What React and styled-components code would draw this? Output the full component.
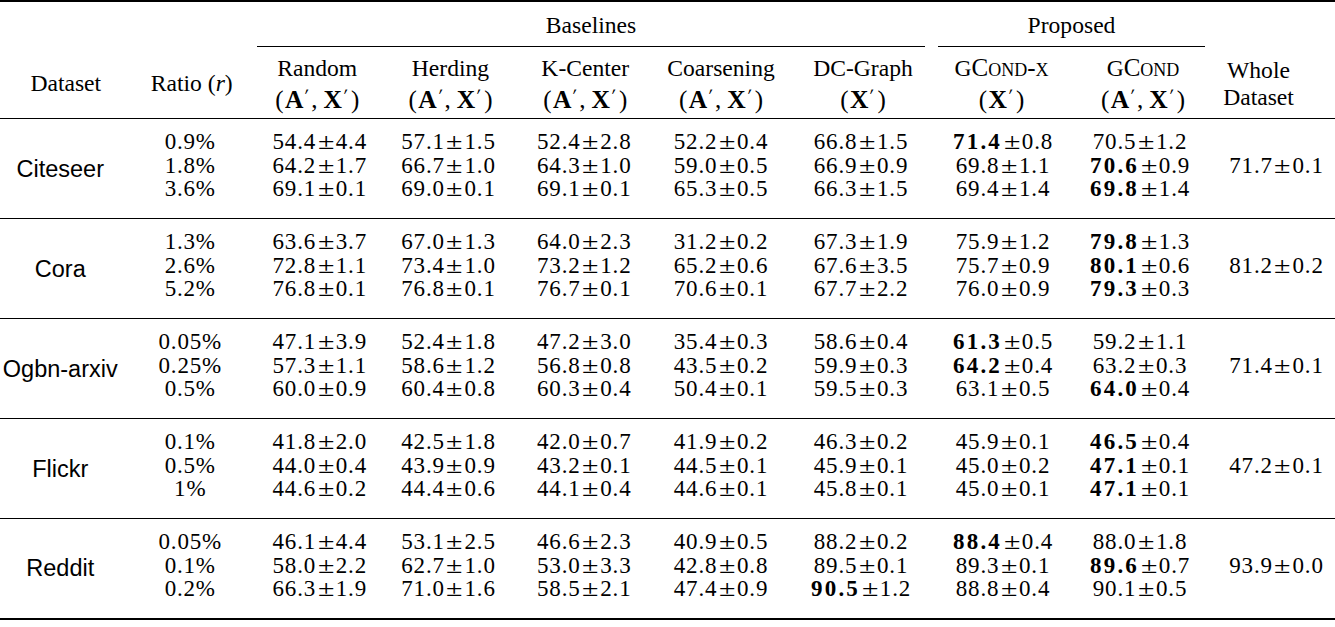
import React from "react";
import styled, { createGlobalStyle } from "styled-components";

const Global = createGlobalStyle`
  html, body { margin: 0; padding: 0; background: #fff; }
  body { font-family: "Liberation Serif", "Times New Roman", serif; color: #000; }
`;

const COLS = "125.5px 128.5px 129.5px 133px 135.5px 140px 140px 140px 138px 125px";

const Page = styled.div`
  width: 1335px;
  background: #fff;
`;

const Table = styled.div`
  border-top: 2.5px solid #000;
  border-bottom: 2.5px solid #000;
`;

const HeadTop = styled.div`
  display: grid;
  grid-template-columns: ${COLS};
  height: 44.5px;
`;

const SpanTitle = styled.div`
  grid-column: ${(p) => p.$from} / ${(p) => p.$to};
  margin: 0 ${(p) => p.$mr}px 0 ${(p) => p.$ml}px;
  border-bottom: 1px solid #000;
  display: flex;
  align-items: center;
  justify-content: center;
  font-size: 23.6px;
  line-height: 27px;
  padding-top: 3px;
`;

const HeadMain = styled.div`
  display: grid;
  grid-template-columns: ${COLS};
  height: 71.5px;
  border-bottom: 1.5px solid #000;
`;

const HeadCell = styled.div`
  display: flex;
  flex-direction: column;
  align-items: center;
  justify-content: center;
  font-size: 23.6px;
  line-height: 27px;
  white-space: nowrap;
  padding-top: 3px;
  padding-left: ${(p) => (p.$dx > 0 ? p.$dx * 2 : 0)}px;
  padding-right: ${(p) => (p.$dx < 0 ? -p.$dx * 2 : 0)}px;
`;

const SmallCaps = styled.span`
  font-variant: small-caps;
  font-size: 25px;
`;

const MathLine = styled.span`
  font-size: 25px;
  line-height: 27px;
`;

const MathBold = styled.b`
  font-weight: 700;
  font-size: 25.5px;
  letter-spacing: 0.5px;
`;

const Prime = styled.span`
  display: inline-block;
  font-size: 19px;
  vertical-align: 6px;
  margin: 0 2.5px 0 0.5px;
  transform: skewX(-12deg);
`;

const Paren = styled.span`
  display: inline-block;
  margin: 0 1.5px;
`;

const Comma = styled.span`
  margin-right: 6px;
`;

const Group = styled.div`
  display: grid;
  grid-template-columns: ${COLS};
  grid-template-rows: 11px 23.5px 23.5px 23.5px 17.5px;
  border-bottom: ${(p) => (p.$last ? "0" : "1.5px solid #000")};
`;

const DatasetName = styled.div`
  grid-column: 1;
  grid-row: 1 / 6;
  display: flex;
  align-items: center;
  justify-content: center;
  font-family: "Liberation Sans", Arial, sans-serif;
  font-size: 23.5px;
  padding-right: 5px;
  padding-top: ${(p) => (p.$last ? 0 : 1.5)}px;
`;

const Cell = styled.div`
  grid-column: ${(p) => p.$col};
  grid-row: ${(p) => p.$row};
  display: flex;
  align-items: center;
  justify-content: center;
  font-size: 23px;
  line-height: 23.5px;
  letter-spacing: 0.8px;
  white-space: nowrap;
  padding-left: ${(p) => (p.$dx > 0 ? p.$dx * 2 : 0)}px;
  padding-right: ${(p) => (p.$dx < 0 ? -p.$dx * 2 : 0)}px;
`;

const BoldPart = styled.b`
  font-weight: 700;
  letter-spacing: 2.2px;
`;

const Pm = styled.span`
  display: inline-block;
  margin: 0 3.6px;
  letter-spacing: 0;
  transform: scaleX(1.3);
`;

const Italic = styled.i`
  font-style: italic;
`;

function Num({ text }) {
  const bold = text.startsWith("*");
  const t = bold ? text.slice(1) : text;
  const [v, e] = t.split("±");
  return (
    <>
      {bold ? <BoldPart>{v}</BoldPart> : v}
      <Pm>±</Pm>
      {e}
    </>
  );
}

function AX({ a = true }) {
  return (
    <MathLine>
      <Paren>(</Paren>
      {a && (
        <>
          <MathBold>A</MathBold>
          <Prime>′</Prime>
          <Comma>,</Comma>
        </>
      )}
      <MathBold>X</MathBold>
      <Prime>′</Prime>
      <Paren>)</Paren>
    </MathLine>
  );
}

const GROUPS = [
  {
    name: "Citeseer",
    ratios: ["0.9%", "1.8%", "3.6%"],
    whole: "71.7±0.1",
    rows: [
      ["54.4±4.4", "57.1±1.5", "52.4±2.8", "52.2±0.4", "66.8±1.5", "*71.4±0.8", "70.5±1.2"],
      ["64.2±1.7", "66.7±1.0", "64.3±1.0", "59.0±0.5", "66.9±0.9", "69.8±1.1", "*70.6±0.9"],
      ["69.1±0.1", "69.0±0.1", "69.1±0.1", "65.3±0.5", "66.3±1.5", "69.4±1.4", "*69.8±1.4"],
    ],
  },
  {
    name: "Cora",
    ratios: ["1.3%", "2.6%", "5.2%"],
    whole: "81.2±0.2",
    rows: [
      ["63.6±3.7", "67.0±1.3", "64.0±2.3", "31.2±0.2", "67.3±1.9", "75.9±1.2", "*79.8±1.3"],
      ["72.8±1.1", "73.4±1.0", "73.2±1.2", "65.2±0.6", "67.6±3.5", "75.7±0.9", "*80.1±0.6"],
      ["76.8±0.1", "76.8±0.1", "76.7±0.1", "70.6±0.1", "67.7±2.2", "76.0±0.9", "*79.3±0.3"],
    ],
  },
  {
    name: "Ogbn-arxiv",
    ratios: ["0.05%", "0.25%", "0.5%"],
    whole: "71.4±0.1",
    rows: [
      ["47.1±3.9", "52.4±1.8", "47.2±3.0", "35.4±0.3", "58.6±0.4", "*61.3±0.5", "59.2±1.1"],
      ["57.3±1.1", "58.6±1.2", "56.8±0.8", "43.5±0.2", "59.9±0.3", "*64.2±0.4", "63.2±0.3"],
      ["60.0±0.9", "60.4±0.8", "60.3±0.4", "50.4±0.1", "59.5±0.3", "63.1±0.5", "*64.0±0.4"],
    ],
  },
  {
    name: "Flickr",
    ratios: ["0.1%", "0.5%", "1%"],
    whole: "47.2±0.1",
    rows: [
      ["41.8±2.0", "42.5±1.8", "42.0±0.7", "41.9±0.2", "46.3±0.2", "45.9±0.1", "*46.5±0.4"],
      ["44.0±0.4", "43.9±0.9", "43.2±0.1", "44.5±0.1", "45.9±0.1", "45.0±0.2", "*47.1±0.1"],
      ["44.6±0.2", "44.4±0.6", "44.1±0.4", "44.6±0.1", "45.8±0.1", "45.0±0.1", "*47.1±0.1"],
    ],
  },
  {
    name: "Reddit",
    ratios: ["0.05%", "0.1%", "0.2%"],
    whole: "93.9±0.0",
    rows: [
      ["46.1±4.4", "53.1±2.5", "46.6±2.3", "40.9±0.5", "88.2±0.2", "*88.4±0.4", "88.0±1.8"],
      ["58.0±2.2", "62.7±1.0", "53.0±3.3", "42.8±0.8", "89.5±0.1", "89.3±0.1", "*89.6±0.7"],
      ["66.3±1.9", "71.0±1.6", "58.5±2.1", "47.4±0.9", "*90.5±1.2", "88.8±0.4", "90.1±0.5"],
    ],
  },
];

const DX = [0.5, 1, -1.5, 0, -1, -1, 1, -1, 2];

export default function App() {
  return (
    <Page>
      <Global />
      <Table>
        <HeadTop>
          <SpanTitle $from={3} $to={8} $ml={3} $mr={7}>
            Baselines
          </SpanTitle>
          <SpanTitle $from={8} $to={10} $ml={6} $mr={5}>
            Proposed
          </SpanTitle>
        </HeadTop>
        <HeadMain>
          <HeadCell $dx={3}>Dataset</HeadCell>
          <HeadCell $dx={2}>
            <span>
              Ratio (<Italic>r</Italic>)
            </span>
          </HeadCell>
          <HeadCell $dx={-1.5}>
            <span>Random</span>
            <AX />
          </HeadCell>
          <HeadCell $dx={0.5}>
            <span>Herding</span>
            <AX />
          </HeadCell>
          <HeadCell $dx={1}>
            <span>K-Center</span>
            <AX />
          </HeadCell>
          <HeadCell $dx={-1}>
            <span>Coarsening</span>
            <AX />
          </HeadCell>
          <HeadCell $dx={1}>
            <span>DC-Graph</span>
            <AX a={false} />
          </HeadCell>
          <HeadCell $dx={-0.5}>
            <span>
              G<SmallCaps>Cond-x</SmallCaps>
            </span>
            <AX a={false} />
          </HeadCell>
          <HeadCell $dx={2}>
            <span>
              G<SmallCaps>Cond</SmallCaps>
            </span>
            <AX />
          </HeadCell>
          <HeadCell $dx={-14}>
            <span>Whole</span>
            <span>Dataset</span>
          </HeadCell>
        </HeadMain>
        {GROUPS.map((g, gi) => (
          <Group key={g.name} $last={gi === GROUPS.length - 1}>
            <DatasetName $last={gi === GROUPS.length - 1}>{g.name}</DatasetName>
            {g.rows.map((r, ri) => (
              <React.Fragment key={ri}>
                <Cell $col={2} $row={ri + 2} $dx={DX[0]}>
                  {g.ratios[ri]}
                </Cell>
                {r.map((v, ci) => (
                  <Cell key={ci} $col={ci + 3} $row={ri + 2} $dx={DX[ci + 1]}>
                    <Num text={v} />
                  </Cell>
                ))}
              </React.Fragment>
            ))}
            <Cell $col={10} $row={3} $dx={4}>
              <Num text={g.whole} />
            </Cell>
          </Group>
        ))}
      </Table>
    </Page>
  );
}
